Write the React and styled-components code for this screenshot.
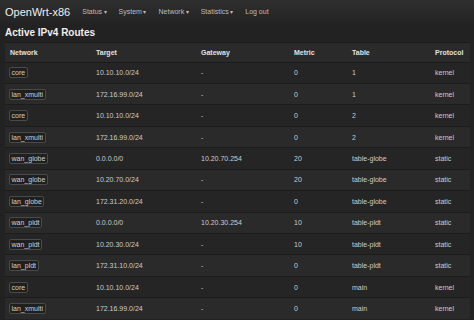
import React from "react";
import styled, { createGlobalStyle } from "styled-components";

const Global = createGlobalStyle`
  html, body {
    margin: 0;
    padding: 0;
    background: #222222;
    font-family: "Liberation Sans", Arial, sans-serif;
    color: #d8d8d8;
  }
`;

const NavBar = styled.div`
  display: flex;
  align-items: center;
  height: 23px;
  padding: 0 5px;
  background: linear-gradient(#2f2f2f, #232323);
`;

const Brand = styled.span`
  font-size: 11px;
  color: #f0f0f0;
  margin-right: 12px;
`;

const NavItem = styled.span`
  font-size: 7px;
  color: #bdbdbd;
  margin-right: ${(p) => p.$gap}px;
  &::after {
    content: ${(p) => (p.$menu ? '" \\25BE"' : '""')};
    font-size: 5.5px;
  }
`;

const Title = styled.h2`
  margin: 3px 5px 0;
  font-size: 10px;
  font-weight: bold;
  color: #eeeeee;
  line-height: 14px;
`;

const Table = styled.div`
  margin: 2px 4px 0 5px;
  display: grid;
  grid-template-columns: 86px 105px 93px 58px 83px 40px;
`;

const Row = styled.div`
  display: contents;
  & > div {
    background: ${(p) => (p.$head ? "#2a2a2a" : p.$odd ? "#2a2a2a" : "#252525")};
    border-top: 1px solid #1c1c1c;
    font-weight: ${(p) => (p.$head ? "bold" : "normal")};
    color: ${(p) => (p.$head ? "#e2e2e2" : "#cccccc")};
    height: ${(p) => (p.$head ? "18.5px" : "20.45px")};
  }
`;

const Cell = styled.div`
  display: flex;
  align-items: center;
  padding-left: 5px;
  font-size: 7px;
  white-space: nowrap;
`;

const Badge = styled.span`
  display: inline-block;
  padding: 1px 1.5px;
  margin-left: -1px;
  border: 1px solid #4a4a4a;
  border-radius: 2px;
  background: #1f1f1f;
  color: #cfcfcf;
`;

const routes = [
  ["core", "10.10.10.0/24", "-", "0", "1", "kernel"],
  ["lan_xmulti", "172.16.99.0/24", "-", "0", "1", "kernel"],
  ["core", "10.10.10.0/24", "-", "0", "2", "kernel"],
  ["lan_xmulti", "172.16.99.0/24", "-", "0", "2", "kernel"],
  ["wan_globe", "0.0.0.0/0", "10.20.70.254", "20", "table-globe", "static"],
  ["wan_globe", "10.20.70.0/24", "-", "20", "table-globe", "static"],
  ["lan_globe", "172.31.20.0/24", "-", "0", "table-globe", "static"],
  ["wan_pldt", "0.0.0.0/0", "10.20.30.254", "10", "table-pldt", "static"],
  ["wan_pldt", "10.20.30.0/24", "-", "10", "table-pldt", "static"],
  ["lan_pldt", "172.31.10.0/24", "-", "0", "table-pldt", "static"],
  ["core", "10.10.10.0/24", "-", "0", "main", "kernel"],
  ["lan_xmulti", "172.16.99.0/24", "-", "0", "main", "kernel"],
];

const heads = ["Network", "Target", "Gateway", "Metric", "Table", "Protocol"];

export default function App() {
  return (
    <>
      <Global />
      <NavBar>
        <Brand>OpenWrt-x86</Brand>
        <NavItem $menu $gap={12}>Status</NavItem>
        <NavItem $menu $gap={12}>System</NavItem>
        <NavItem $menu $gap={12}>Network</NavItem>
        <NavItem $menu $gap={12}>Statistics</NavItem>
        <NavItem $gap={0}>Log out</NavItem>
      </NavBar>
      <Title>Active IPv4 Routes</Title>
      <Table>
        <Row $head>
          {heads.map((h) => (
            <Cell key={h}>{h}</Cell>
          ))}
        </Row>
        {routes.map((r, i) => (
          <Row key={i} $odd={i % 2 === 1}>
            <Cell>
              <Badge>{r[0]}</Badge>
            </Cell>
            {r.slice(1).map((v, j) => (
              <Cell key={j}>{v}</Cell>
            ))}
          </Row>
        ))}
      </Table>
    </>
  );
}
